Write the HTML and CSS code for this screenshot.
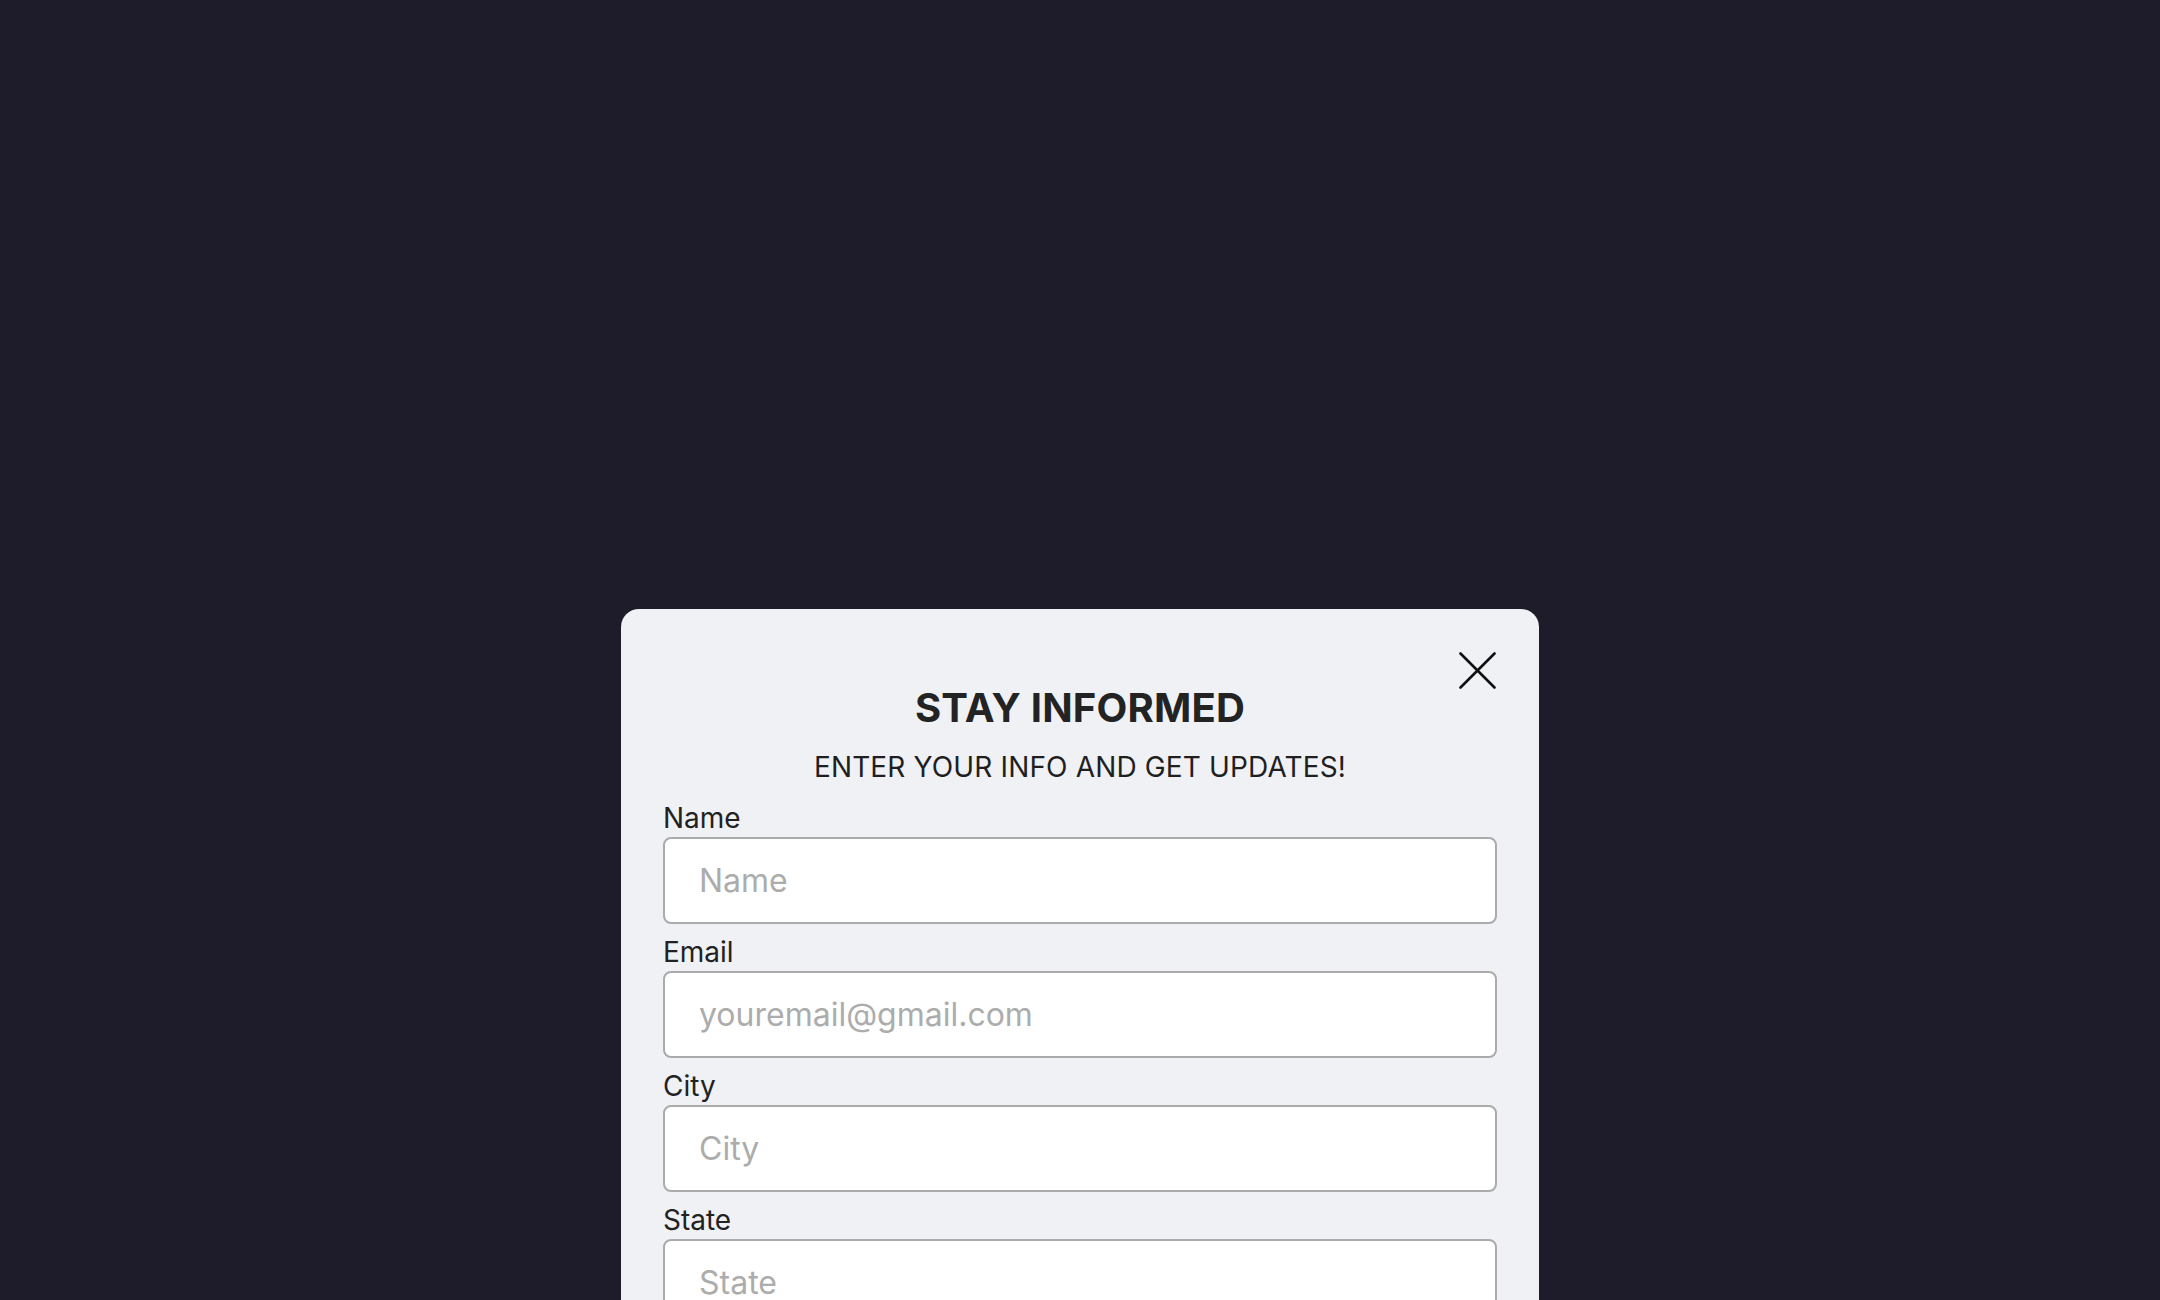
FILE: index.html
```html
<!DOCTYPE html>
<html lang="en">
<head>
<meta charset="utf-8">
<title>Stay Informed</title>
<link rel="stylesheet" href="styles.css">
</head>
<body>
<div class="overlay">
  <div class="modal">
    <button class="close" aria-label="Close">
      <svg width="37" height="37" viewBox="0 0 37 37"><path d="M1.5 1.5 L35.5 35.5 M35.5 1.5 L1.5 35.5" stroke="#111" stroke-width="2.6" stroke-linecap="round" fill="none"/></svg>
    </button>
    <h1 class="title">STAY INFORMED</h1>
    <p class="subtitle">ENTER YOUR INFO AND GET UPDATES!</p>
    <form class="form">
      <label class="field"><span class="label">Name</span><input class="input" type="text" placeholder="Name"></label>
      <label class="field"><span class="label">Email</span><input class="input" type="email" placeholder="youremail@gmail.com"></label>
      <label class="field"><span class="label">City</span><input class="input" type="text" placeholder="City"></label>
      <label class="field"><span class="label">State</span><input class="input" type="text" placeholder="State"></label>
      <label class="field"><span class="label">Zip</span><input class="input" type="text" placeholder="Zip"></label>
    </form>
  </div>
</div>
</body>
</html>
```

FILE: styles.css
```css
html, body {
  margin: 0;
  padding: 0;
  height: 100%;
  overflow: hidden;
}
body {
  background: #1e1b2b;
  font-family: Inter, "Noto Sans", sans-serif;
  color: #222;
}
.overlay {
  display: flex;
  justify-content: center;
  padding-top: 609px;
}
.modal {
  position: relative;
  width: 918px;
  box-sizing: border-box;
  background: #f0f1f5;
  border-radius: 18px;
  padding: 75px 42px 60px 42px;
}
.close {
  position: absolute;
  top: 43px;
  right: 43px;
  width: 37px;
  height: 37px;
  padding: 0;
  border: 0;
  background: transparent;
  display: flex;
}
.title {
  margin: 0;
  text-align: center;
  font-size: 40px;
  font-weight: 700;
  line-height: 48px;
  letter-spacing: 0.2px;
  color: #232323;
}
.subtitle {
  margin: 18px 0 0;
  text-align: center;
  font-size: 28px;
  font-weight: 400;
  line-height: 34px;
  letter-spacing: 0.15px;
  color: #1f1f1f;
}
.form {
  display: flex;
  flex-direction: column;
  gap: 11px;
  margin-top: 17px;
}
.field {
  display: flex;
  flex-direction: column;
  gap: 2px;
}
.label {
  font-size: 28px;
  line-height: 34px;
  color: #222;
}
.input {
  box-sizing: border-box;
  height: 87px;
  width: 100%;
  border: 2px solid #ababab;
  border-radius: 8px;
  background: #fff;
  padding: 0 34px;
  font-family: Inter, "Noto Sans", sans-serif;
  font-size: 32px;
  color: #222;
  outline: none;
}
.input::placeholder {
  color: #acacac;
}
```
